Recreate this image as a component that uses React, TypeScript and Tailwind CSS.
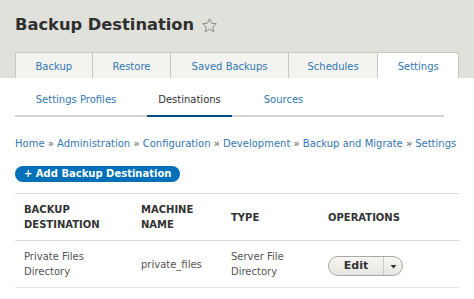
import React from "react";

const font = { fontFamily: '"DejaVu Sans", sans-serif' };

function Star() {
  return (
    <svg width="17" height="17" viewBox="0 0 24 24" className="ml-[7px] mt-[1px]">
      <path
        d="M12 2.5l2.9 6.2 6.7.8-5 4.6 1.4 6.7L12 17.4l-6 3.4 1.4-6.7-5-4.6 6.7-.8z"
        fill="none"
        stroke="#8a8a84"
        strokeWidth="1.4"
        strokeLinejoin="round"
      />
    </svg>
  );
}

export default function App() {
  const tabs = [
    { label: "Backup", w: 77 },
    { label: "Restore", w: 79 },
    { label: "Saved Backups", w: 118 },
    { label: "Schedules", w: 90 },
    { label: "Settings", w: 82, active: true },
  ];
  const crumbs = ["Home", "Administration", "Configuration", "Development", "Backup and Migrate", "Settings"];
  return (
    <div className="w-[474px] h-[299px] overflow-hidden bg-white text-[#333]" style={font}>
      <div className="bg-[#e1e1db] pt-[13px] px-[15px]">
        <div className="flex items-center h-[24px]">
          <h1 className="text-[16.3px] font-bold text-[#2f2f2f] leading-none">Backup Destination</h1>
          <Star />
        </div>
        <div className="flex mt-[15px] h-[26px]">
          {tabs.map((t) => (
            <div
              key={t.label}
              style={{ width: t.w }}
              className={
                "flex items-center justify-center text-[10px] pt-[1px] text-[#3479b2] border-l border-t border-[#c8c8c2] " +
                (t.active ? "bg-white border-r rounded-tr-[3px]" : "bg-[#f3f3f0]")
              }
            >
              {t.label}
            </div>
          ))}
        </div>
      </div>
      <div className="px-[15px]">
        <div className="flex h-[39px] border-b-[2px] border-[#d4d4d0] text-[10px] text-[#3479b2] mr-[15px]">
          <div className="w-[122px] flex items-end justify-center pb-[8px]">Settings Profiles</div>
          <div className="w-[85px] flex items-end justify-center pb-[8px] text-[#333] border-b-[2px] border-[#004f80] mb-[-2px] ml-[10px]">Destinations</div>
          <div className="w-[85px] flex items-end justify-center pb-[8px] ml-[9px]">Sources</div>
        </div>
        <div className="mt-[20px] text-[10px] leading-[14px] text-[#3479b2] whitespace-nowrap">
          {crumbs.map((c, i) => (
            <span key={c}>
              {i > 0 && <span className="text-[#555]"> » </span>}
              {c}
            </span>
          ))}
        </div>
        <div className="mt-[15px] flex">
          <span className="inline-flex items-center h-[16px] px-[9px] rounded-full bg-[#0071b8] text-white text-[10px] font-bold leading-none">
            + Add Backup Destination
          </span>
        </div>
        <table className="mt-[11px] w-[444px] border-collapse text-left">
          <thead>
            <tr className="border-t border-b border-[#dcdcd6] h-[47px]">
              <th className="pl-[9px] w-[126px] text-[10px] font-bold uppercase leading-[15px] text-[#333]">Backup<br />Destination</th>
              <th className="w-[90px] text-[10px] font-bold uppercase leading-[15px] text-[#333]">Machine<br />name</th>
              <th className="w-[97px] text-[10px] font-bold uppercase leading-[15px] text-[#333]">Type</th>
              <th className="text-[10px] font-bold uppercase leading-[15px] text-[#333]">Operations</th>
            </tr>
          </thead>
          <tbody>
            <tr className="border-b border-[#e6e6e2] h-[47px]">
              <td className="pl-[9px] text-[10px] leading-[15px] text-[#555]">Private Files<br />Directory</td>
              <td className="text-[10px] text-[#555]">private_files</td>
              <td className="text-[10px] leading-[15px] text-[#555]">Server File<br />Directory</td>
              <td>
                <div className="inline-flex h-[20px] rounded-full border border-[#a8a8a4] bg-gradient-to-b from-[#f6f6f3] to-[#e6e6e1] overflow-hidden">
                  <span className="w-[55px] flex items-center justify-center text-[11px] font-bold text-[#333] border-r border-[#c8c8c4]">Edit</span>
                  <span className="w-[18px] flex items-center justify-center">
                    <svg width="7" height="5" viewBox="0 0 7 5"><path d="M0.5 1h6L3.5 4.5z" fill="#333" /></svg>
                  </span>
                </div>
              </td>
            </tr>
          </tbody>
        </table>
      </div>
    </div>
  );
}
